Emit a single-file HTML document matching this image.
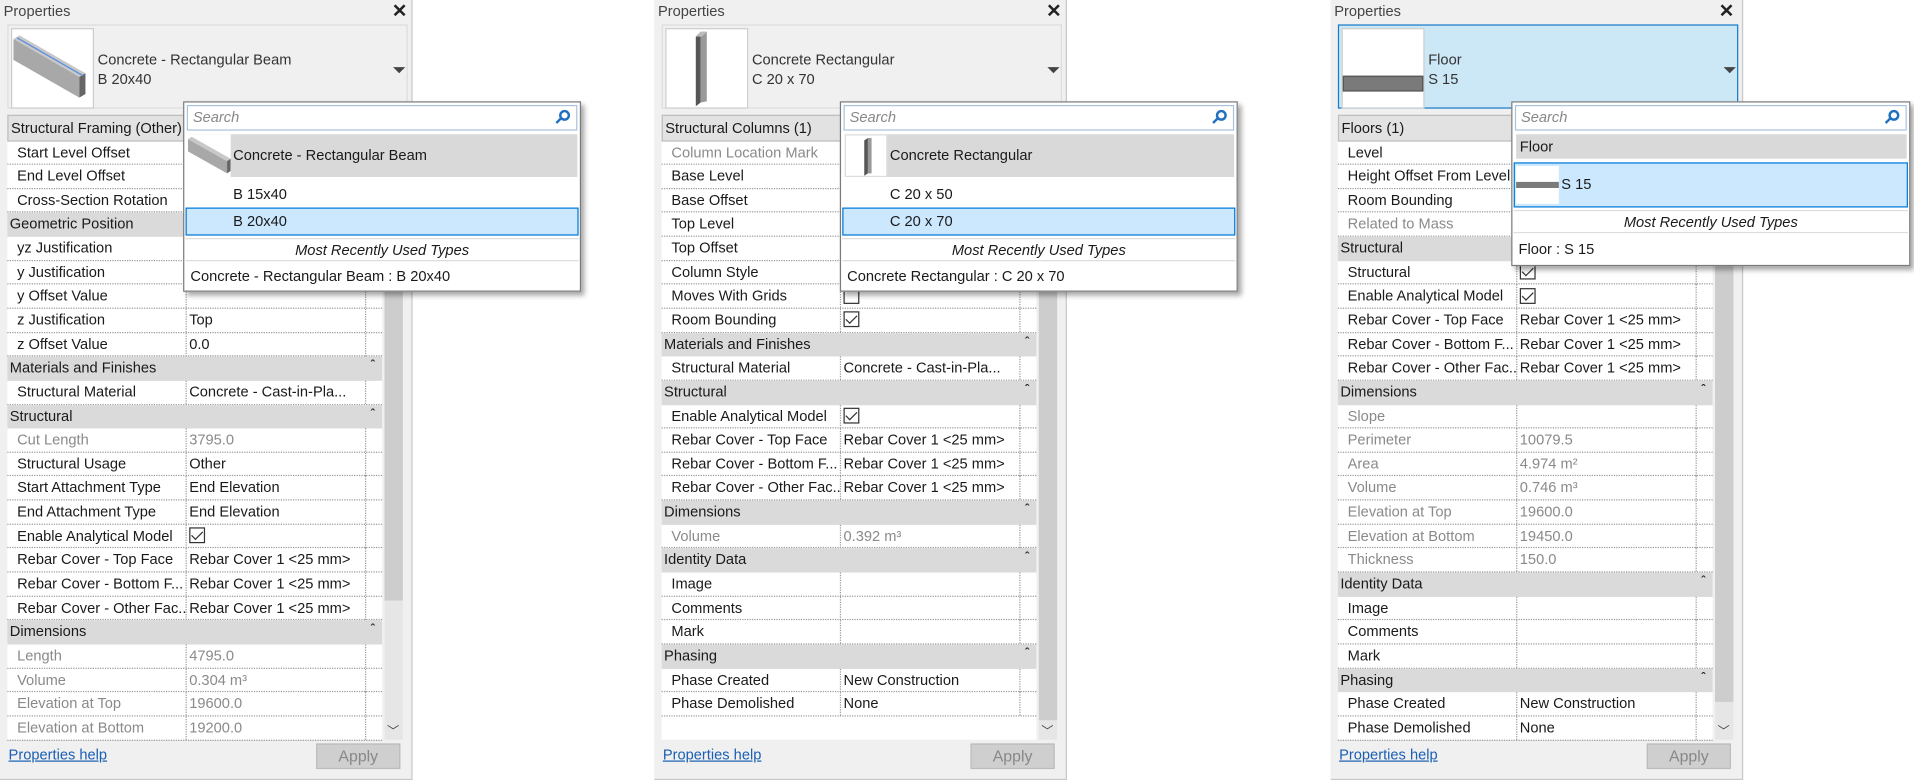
<!DOCTYPE html>
<html><head><meta charset="utf-8">
<style>
*{box-sizing:border-box;margin:0;padding:0}
body{width:1914px;height:780px;overflow:hidden;background:#fff;font-family:"Liberation Sans",Arial,sans-serif;font-size:12px;color:#1a1a1a}
#w{position:absolute;left:0;top:0;width:1568px;height:639px;transform:scale(1.2207);transform-origin:0 0}
.p{position:absolute;top:0;width:338px;height:639px;background:#f0f0f0;border-right:1px solid #c8c8c8;border-bottom:1px solid #c8c8c8}
.tt{position:absolute;left:3px;top:2px;font-size:12px;color:#444}
.x{position:absolute;left:321px;top:0px;font-size:15px;font-weight:bold;color:#222}
.ts{position:absolute;left:6px;top:20px;width:328px;height:69px;border:1px solid #ddd;background:#f0f0f0}
.ts.sel{background:#cce8f6;border-color:#1979ca}
.th{position:absolute;left:2px;top:2px;width:68px;height:66px;background:#fff;border:1px solid #ccc}
.tn{position:absolute;left:73px;top:20px;line-height:16px;color:#333}
.ar{position:absolute;left:315px;top:34px;width:0;height:0;border-left:5px solid transparent;border-right:5px solid transparent;border-top:5px solid #444}
.g{position:absolute;left:6px;top:94px;width:307px;height:512px;background:#fff}
.r,.h,.ch{height:19.65px;line-height:19px;white-space:nowrap;position:relative}
.r{border-bottom:1px dotted #999}
.r .k{position:absolute;left:0;width:147px;padding-left:8px;overflow:hidden;border-right:1px dotted #999;height:19px}
.r .v{position:absolute;left:147px;width:147px;padding-left:2px;overflow:hidden;border-right:1px dotted #999;height:19px}
.gr{color:#8a8a8a}
.h{background:#dadada;padding-left:2px}
.h .c{position:absolute;right:6px;top:-2px;font-size:10px;font-weight:bold}
.ch{background:#e2e2e2;border:1px solid #bdbdbd;padding-left:2px;height:21.5px;line-height:20px}
.cb{display:inline-block;width:13px;height:13px;border:1px solid #333;vertical-align:middle;margin-top:-2px;position:relative;background:#fff}
.cb.on:after{content:"";position:absolute;left:3px;top:0px;width:4px;height:8px;border-right:1px solid #333;border-bottom:1px solid #333;transform:rotate(45deg)}
.sb{position:absolute;left:315px;top:94px;width:15px;height:512px;background:#e6e6e6}
.sbt{position:absolute;left:0;width:15px;background:#cdcdcd}
.dn{position:absolute;left:317px;top:590px;font-size:10px;color:#444}
.lk{position:absolute;left:7px;top:611px;color:#1a5fb4;text-decoration:underline}
.ap{position:absolute;left:259px;top:609px;width:69px;height:21px;background:#cfcfcf;border:1px solid #bbb;color:#888;text-align:center;line-height:19px;font-size:13px}
.dd{position:absolute;top:83px;width:326px;background:#fff;border:1px solid #7a7a7a;box-shadow:3px 3px 4px rgba(0,0,0,.35)}
.se{margin:2px;height:21px;border:1px solid #a9c3dc;color:#888;font-style:italic;padding-left:4px;line-height:19px;position:relative}
.mg{position:absolute;right:5px;top:3px;width:9px;height:9px;border:2px solid #1f6fc2;border-radius:50%}
.mg:after{content:"";position:absolute;left:-5px;top:6px;width:5px;height:2px;background:#1f6fc2;transform:rotate(-45deg)}
.fam{margin:3px 2px 0 3px;height:35px;background:#d9d9d9;position:relative;line-height:35px;padding-left:37px}
.fth{position:absolute;left:0;top:0;width:35px;height:35px;background:#fff}
.it{height:22px;line-height:22px;padding-left:40px}
.isel{margin:0 1px;height:23px;line-height:21px;padding-left:38px;background:#cce8ff;border:1px solid #0078d7}
.mru{margin:2px 1px 0;height:19px;line-height:18px;text-align:center;font-style:italic;border:1px solid #ddd;border-left:none;border-right:none}
.mi{height:24px;line-height:24px;padding-left:5px}
</style></head><body><div id="w">

<!-- PANEL 1 -->
<div class="p" style="left:0">
<div class="tt">Properties</div><div class="x">✕</div>
<div class="ts"><div class="th"><svg width="66" height="64"><polygon points="1,8 6,5 60,36 55,39" fill="#c8c8c8"/><polygon points="1,8 55,39 55,56 1,25" fill="#a8a8a8"/><polygon points="55,39 60,36 60,53 55,56" fill="#666"/><line x1="4" y1="7" x2="58" y2="38" stroke="#5a8ee0" stroke-width="1"/></svg></div>
<div class="tn">Concrete - Rectangular Beam<br>B 20x40</div><div class="ar"></div></div>
<div class="g">
<div class="ch">Structural Framing (Other)</div>
<div class="r"><span class="k">Start Level Offset</span><span class="v"></span></div>
<div class="r"><span class="k">End Level Offset</span><span class="v"></span></div>
<div class="r"><span class="k">Cross-Section Rotation</span><span class="v"></span></div>
<div class="h">Geometric Position<span class="c">ˆ</span></div>
<div class="r"><span class="k">yz Justification</span><span class="v"></span></div>
<div class="r"><span class="k">y Justification</span><span class="v"></span></div>
<div class="r"><span class="k">y Offset Value</span><span class="v"></span></div>
<div class="r"><span class="k">z Justification</span><span class="v">Top</span></div>
<div class="r"><span class="k">z Offset Value</span><span class="v">0.0</span></div>
<div class="h">Materials and Finishes<span class="c">ˆ</span></div>
<div class="r"><span class="k">Structural Material</span><span class="v">Concrete - Cast-in-Pla...</span></div>
<div class="h">Structural<span class="c">ˆ</span></div>
<div class="r"><span class="k gr">Cut Length</span><span class="v gr">3795.0</span></div>
<div class="r"><span class="k">Structural Usage</span><span class="v">Other</span></div>
<div class="r"><span class="k">Start Attachment Type</span><span class="v">End Elevation</span></div>
<div class="r"><span class="k">End Attachment Type</span><span class="v">End Elevation</span></div>
<div class="r"><span class="k">Enable Analytical Model</span><span class="v"><span class="cb on"></span></span></div>
<div class="r"><span class="k">Rebar Cover - Top Face</span><span class="v">Rebar Cover 1 &lt;25 mm&gt;</span></div>
<div class="r"><span class="k">Rebar Cover - Bottom F...</span><span class="v">Rebar Cover 1 &lt;25 mm&gt;</span></div>
<div class="r"><span class="k">Rebar Cover - Other Fac...</span><span class="v">Rebar Cover 1 &lt;25 mm&gt;</span></div>
<div class="h">Dimensions<span class="c">ˆ</span></div>
<div class="r"><span class="k gr">Length</span><span class="v gr">4795.0</span></div>
<div class="r"><span class="k gr">Volume</span><span class="v gr">0.304 m³</span></div>
<div class="r"><span class="k gr">Elevation at Top</span><span class="v gr">19600.0</span></div>
<div class="r"><span class="k gr">Elevation at Bottom</span><span class="v gr">19200.0</span></div>
</div>
<div class="sb"><div class="sbt" style="top:6px;height:392px"></div></div>
<div class="dn">﹀</div>
<div class="lk">Properties help</div><div class="ap">Apply</div>
</div>
<div class="dd" style="left:150px">
<div class="se">Search<span class="mg"></span></div>
<div class="fam"><div class="fth"><svg width="35" height="35"><polygon points="0,4 3,2 35,20 32,22" fill="#c8c8c8"/><polygon points="0,4 32,22 32,32 0,14" fill="#a8a8a8"/><polygon points="32,22 35,20 35,30 32,32" fill="#666"/></svg></div>Concrete - Rectangular Beam</div>
<div class="it" style="margin-top:3px">B 15x40</div>
<div class="isel">B 20x40</div>
<div class="mru">Most Recently Used Types</div>
<div class="mi">Concrete - Rectangular Beam : B 20x40</div>
</div>

<!-- PANEL 2 -->
<div class="p" style="left:536px">
<div class="tt">Properties</div><div class="x">✕</div>
<div class="ts"><div class="th"><svg width="66" height="64"><polygon points="24,6 28,2 28,60 24,63" fill="#555"/><polygon points="28,2 33,2 33,59 28,60" fill="#999"/><polygon points="24,6 28,2 33,2 29,6" fill="#bbb"/></svg></div>
<div class="tn">Concrete Rectangular<br>C 20 x 70</div><div class="ar"></div></div>
<div class="g">
<div class="ch">Structural Columns (1)</div>
<div class="r"><span class="k gr">Column Location Mark</span><span class="v"></span></div>
<div class="r"><span class="k">Base Level</span><span class="v"></span></div>
<div class="r"><span class="k">Base Offset</span><span class="v"></span></div>
<div class="r"><span class="k">Top Level</span><span class="v"></span></div>
<div class="r"><span class="k">Top Offset</span><span class="v"></span></div>
<div class="r"><span class="k">Column Style</span><span class="v"></span></div>
<div class="r"><span class="k">Moves With Grids</span><span class="v"><span class="cb"></span></span></div>
<div class="r"><span class="k">Room Bounding</span><span class="v"><span class="cb on"></span></span></div>
<div class="h">Materials and Finishes<span class="c">ˆ</span></div>
<div class="r"><span class="k">Structural Material</span><span class="v">Concrete - Cast-in-Pla...</span></div>
<div class="h">Structural<span class="c">ˆ</span></div>
<div class="r"><span class="k">Enable Analytical Model</span><span class="v"><span class="cb on"></span></span></div>
<div class="r"><span class="k">Rebar Cover - Top Face</span><span class="v">Rebar Cover 1 &lt;25 mm&gt;</span></div>
<div class="r"><span class="k">Rebar Cover - Bottom F...</span><span class="v">Rebar Cover 1 &lt;25 mm&gt;</span></div>
<div class="r"><span class="k">Rebar Cover - Other Fac...</span><span class="v">Rebar Cover 1 &lt;25 mm&gt;</span></div>
<div class="h">Dimensions<span class="c">ˆ</span></div>
<div class="r"><span class="k gr">Volume</span><span class="v gr">0.392 m³</span></div>
<div class="h">Identity Data<span class="c">ˆ</span></div>
<div class="r"><span class="k">Image</span><span class="v"></span></div>
<div class="r"><span class="k">Comments</span><span class="v"></span></div>
<div class="r"><span class="k">Mark</span><span class="v"></span></div>
<div class="h">Phasing<span class="c">ˆ</span></div>
<div class="r"><span class="k">Phase Created</span><span class="v">New Construction</span></div>
<div class="r"><span class="k">Phase Demolished</span><span class="v">None</span></div>
</div>
<div class="sb"><div class="sbt" style="top:6px;height:490px"></div></div>
<div class="dn">﹀</div>
<div class="lk">Properties help</div><div class="ap">Apply</div>
</div>
<div class="dd" style="left:688px">
<div class="se">Search<span class="mg"></span></div>
<div class="fam"><div class="fth" style="border:1px solid #ddd"><svg width="35" height="35"><polygon points="15,4 18,2 18,31 15,33" fill="#555"/><polygon points="18,2 21,2 21,31 18,31" fill="#999"/></svg></div>Concrete Rectangular</div>
<div class="it" style="margin-top:3px">C 20 x 50</div>
<div class="isel">C 20 x 70</div>
<div class="mru">Most Recently Used Types</div>
<div class="mi">Concrete Rectangular : C 20 x 70</div>
</div>

<!-- PANEL 3 -->
<div class="p" style="left:1090px">
<div class="tt">Properties</div><div class="x" style="left:318px">✕</div>
<div class="ts sel"><div class="th"><div style="position:absolute;left:0;top:38px;width:66px;height:13px;background:#7a7a7a;border:1px solid #555"></div></div>
<div class="tn">Floor<br>S 15</div><div class="ar"></div></div>
<div class="g">
<div class="ch">Floors (1)</div>
<div class="r"><span class="k">Level</span><span class="v"></span></div>
<div class="r"><span class="k">Height Offset From Level</span><span class="v"></span></div>
<div class="r"><span class="k">Room Bounding</span><span class="v"></span></div>
<div class="r"><span class="k gr">Related to Mass</span><span class="v"></span></div>
<div class="h">Structural<span class="c">ˆ</span></div>
<div class="r"><span class="k">Structural</span><span class="v"><span class="cb on"></span></span></div>
<div class="r"><span class="k">Enable Analytical Model</span><span class="v"><span class="cb on"></span></span></div>
<div class="r"><span class="k">Rebar Cover - Top Face</span><span class="v">Rebar Cover 1 &lt;25 mm&gt;</span></div>
<div class="r"><span class="k">Rebar Cover - Bottom F...</span><span class="v">Rebar Cover 1 &lt;25 mm&gt;</span></div>
<div class="r"><span class="k">Rebar Cover - Other Fac...</span><span class="v">Rebar Cover 1 &lt;25 mm&gt;</span></div>
<div class="h">Dimensions<span class="c">ˆ</span></div>
<div class="r"><span class="k gr">Slope</span><span class="v"></span></div>
<div class="r"><span class="k gr">Perimeter</span><span class="v gr">10079.5</span></div>
<div class="r"><span class="k gr">Area</span><span class="v gr">4.974 m²</span></div>
<div class="r"><span class="k gr">Volume</span><span class="v gr">0.746 m³</span></div>
<div class="r"><span class="k gr">Elevation at Top</span><span class="v gr">19600.0</span></div>
<div class="r"><span class="k gr">Elevation at Bottom</span><span class="v gr">19450.0</span></div>
<div class="r"><span class="k gr">Thickness</span><span class="v gr">150.0</span></div>
<div class="h">Identity Data<span class="c">ˆ</span></div>
<div class="r"><span class="k">Image</span><span class="v"></span></div>
<div class="r"><span class="k">Comments</span><span class="v"></span></div>
<div class="r"><span class="k">Mark</span><span class="v"></span></div>
<div class="h">Phasing<span class="c">ˆ</span></div>
<div class="r"><span class="k">Phase Created</span><span class="v">New Construction</span></div>
<div class="r"><span class="k">Phase Demolished</span><span class="v">None</span></div>
</div>
<div class="sb"><div class="sbt" style="top:6px;height:475px"></div></div>
<div class="dn">﹀</div>
<div class="lk">Properties help</div><div class="ap">Apply</div>
</div>
<div class="dd" style="left:1238px;width:327px">
<div class="se">Search<span class="mg"></span></div>
<div class="fam" style="height:20px;line-height:20px;padding-left:3px">Floor</div>
<div class="isel" style="height:37px;line-height:35px;margin-top:3px;position:relative"><div style="position:absolute;left:1px;top:2px;width:35px;height:31px;background:#fff"><div style="position:absolute;left:0;top:13px;width:35px;height:5px;background:#7a7a7a"></div></div>S 15</div>
<div class="mru">Most Recently Used Types</div>
<div class="mi" style="height:26px;line-height:26px">Floor : S 15</div>
</div>

</div></body></html>
